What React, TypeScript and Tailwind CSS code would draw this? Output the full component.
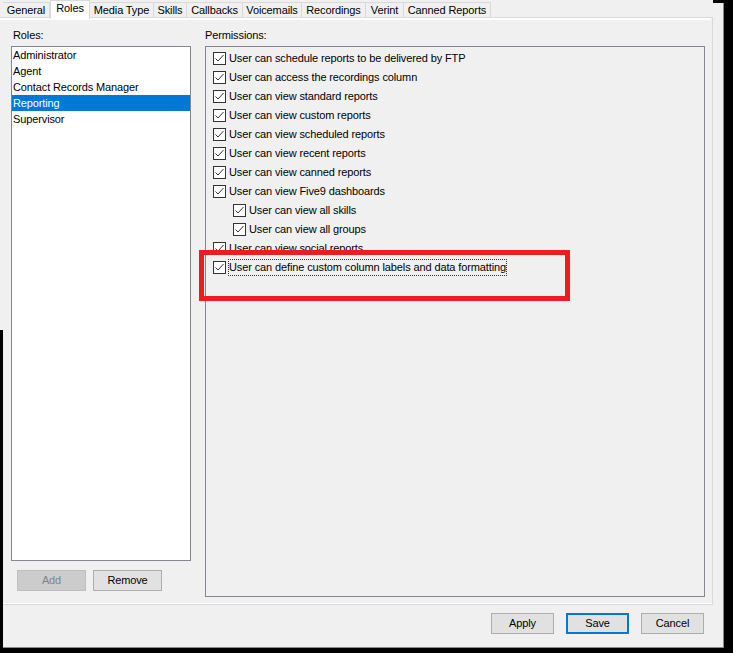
import React from 'react';

const tabs = [
  { label: 'General', w: 'w-[47px]' },
  { label: 'Roles', w: 'w-[40px]', active: true },
  { label: 'Media Type', w: 'w-[64px]' },
  { label: 'Skills', w: 'w-[33px]' },
  { label: 'Callbacks', w: 'w-[56px]' },
  { label: 'Voicemails', w: 'w-[59px]' },
  { label: 'Recordings', w: 'w-[64px]' },
  { label: 'Verint', w: 'w-[38px]' },
  { label: 'Canned Reports', w: 'w-[87px]' },
];

const roles = ['Administrator', 'Agent', 'Contact Records Manager', 'Reporting', 'Supervisor'];

const permissions = [
  { label: 'User can schedule reports to be delivered by FTP' },
  { label: 'User can access the recordings column' },
  { label: 'User can view standard reports' },
  { label: 'User can view custom reports' },
  { label: 'User can view scheduled reports' },
  { label: 'User can view recent reports' },
  { label: 'User can view canned reports' },
  { label: 'User can view Five9 dashboards' },
  { label: 'User can view all skills', indent: true },
  { label: 'User can view all groups', indent: true },
  { label: 'User can view social reports' },
  { label: 'User can define custom column labels and data formatting', focused: true },
];

const Checkbox: React.FC = () => (
  <div className="w-[13px] h-[13px] border border-[#333333] bg-white flex items-center justify-center shrink-0">
    <svg width="11" height="11" viewBox="0 0 11 11">
      <polyline points="1.5,5.5 4,8 9.5,2" fill="none" stroke="#333333" strokeWidth="1" />
    </svg>
  </div>
);

const WinButton: React.FC<{ label: string; variant?: 'default' | 'disabled' | 'primary'; className?: string }> = ({
  label,
  variant = 'default',
  className = '',
}) => {
  const styles =
    variant === 'disabled'
      ? 'bg-[#cccccc] border border-[#bfbfbf] text-[#838383]'
      : variant === 'primary'
      ? 'bg-[#e1e1e1] border-2 border-[#0078d7] text-black'
      : 'bg-[#e1e1e1] border border-[#adadad] text-black';
  return <div className={`h-[21px] flex items-center justify-center ${styles} ${className}`}>{label}</div>;
};

export default function App() {
  return (
    <div className="relative w-[733px] h-[653px] bg-black overflow-hidden font-['Liberation_Sans',Arial,sans-serif] text-[11px] tracking-[-0.12px] text-black leading-none">
      <div className="w-[724px] h-[648px] bg-[#f0f0f0] border-r border-b border-[#8a8a8a] flex flex-col">
        {/* tab strip */}
        <div className="h-[17px] flex items-end pl-[3px] relative z-10">
          {tabs.map(t =>
            t.active ? (
              <div
                key={t.label}
                className={`${t.w} h-[19px] -mb-[2px] bg-white border-x border-t border-[#d9d9d9] flex justify-center pt-[2px]`}
              >
                {t.label}
              </div>
            ) : (
              <div
                key={t.label}
                className={`${t.w} h-[15px] border-r border-t border-[#d9d9d9] flex items-center justify-center pt-[1px]`}
              >
                {t.label}
              </div>
            )
          )}
        </div>

        {/* panel */}
        <div className="w-[713px] h-[588px] border-t border-r border-b border-[#d9d9d9] flex flex-col">
          <div className="h-[2px] bg-white mr-[1px]" />
          <div className="flex flex-1 pl-[11px] gap-[14px] border-b border-white">
            {/* roles */}
            <div className="w-[180px] flex flex-col">
              <div className="h-[26px] flex items-center pt-[4px] pl-[2px]">Roles:</div>
              <div className="h-[515px] border border-[#828790] bg-white">
                {roles.map(r => (
                  <div
                    key={r}
                    className={`h-[16px] flex items-center pl-[1px] ${r === 'Reporting' ? 'bg-[#0078d7] text-white' : ''}`}
                  >
                    {r}
                  </div>
                ))}
              </div>
              <div className="flex gap-[7px] mt-[9px] pl-[6px]">
                <WinButton label="Add" variant="disabled" className="w-[69px]" />
                <WinButton label="Remove" className="w-[69px]" />
              </div>
            </div>

            {/* permissions */}
            <div className="w-[500px] flex flex-col">
              <div className="h-[26px] flex items-center pt-[4px]">Permissions:</div>
              <div className="h-[551px] border border-[#828790] pt-[2px] pl-[7px]">
                {permissions.map(p => (
                  <div key={p.label} className={`h-[19px] flex items-center gap-[3px] ${p.indent ? 'pl-[20px]' : ''}`}>
                    <Checkbox />
                    {p.focused ? (
                      <span className="border border-dotted border-[#333333] -ml-px py-[2px] leading-none">
                        {p.label}
                      </span>
                    ) : (
                      <span>{p.label}</span>
                    )}
                  </div>
                ))}
              </div>
            </div>
          </div>
        </div>

        {/* dialog buttons */}
        <div className="flex-1 flex justify-end items-start pt-[8px] pr-[19px] gap-[12px]">
          <WinButton label="Apply" className="w-[63px]" />
          <WinButton label="Save" variant="primary" className="w-[63px]" />
          <WinButton label="Cancel" className="w-[63px]" />
        </div>
      </div>

      {/* screenshot frame bits */}
      <div className="absolute left-0 top-[330px] bottom-0 w-[3px] bg-black" />
      <div className="absolute left-[713px] top-0 w-[11px] h-[3px] bg-black" />

      {/* annotation */}
      <div className="absolute left-[199px] top-[250px] w-[371px] h-[51px] border-[5px] border-[#ed1c24]" />
    </div>
  );
}
